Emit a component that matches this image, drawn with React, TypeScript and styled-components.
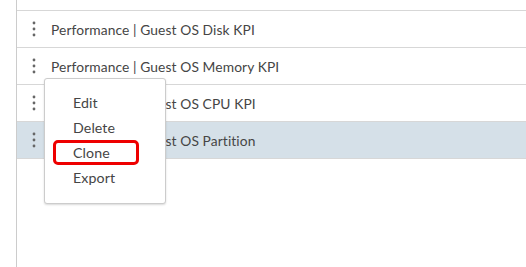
import styled, { createGlobalStyle } from "styled-components";

const GlobalStyle = createGlobalStyle`
  html, body {
    margin: 0;
    padding: 0;
    background: #ffffff;
    font-family: Lato, "Open Sans", sans-serif;
  }
`;

const Page = styled.div`
  width: 526px;
  height: 267px;
  overflow: hidden;
  padding-left: 16px;
  box-sizing: border-box;
`;

const Grid = styled.div`
  position: relative;
  height: 267px;
  border-left: 1px solid #cccccc;
`;

const TopStub = styled.div`
  height: 10px;
  border-bottom: 1px solid #d7d7d7;
`;

const Row = styled.div<{ selected?: boolean }>`
  display: flex;
  align-items: center;
  height: 36px;
  border-bottom: 1px solid #d7d7d7;
  background: ${({ selected }) => (selected ? "#d5e0e8" : "#ffffff")};
`;

const Handle = styled.div`
  width: 34px;
  display: flex;
  justify-content: center;
`;

const Label = styled.span`
  font-size: 13.8px;
  color: #454545;
  white-space: nowrap;
  letter-spacing: 0.1px;
`;

const Menu = styled.div`
  position: absolute;
  left: 27px;
  top: 78px;
  width: 120px;
  padding: 11px 0 13px;
  background: #ffffff;
  border: 1px solid #cccccc;
  border-radius: 3px;
  box-shadow: 0 1px 2px rgba(0, 0, 0, 0.15);
`;

const MenuItem = styled.div<{ marked?: boolean }>`
  position: relative;
  height: 25px;
  line-height: 25px;
  padding-left: 28px;
  font-size: 14.2px;
  color: #454545;
  letter-spacing: 0.1px;

  ${({ marked }) =>
    marked &&
    `
    &::before {
      content: "";
      position: absolute;
      left: 8px;
      top: 0;
      width: 86px;
      height: 25px;
      box-sizing: border-box;
      border: 3px solid #ee0000;
      border-radius: 5px;
    }
  `}
`;

function Dots() {
  return (
    <svg width="4" height="16" viewBox="0 0 4 16">
      <circle cx="2" cy="2" r="1.4" fill="#666666" />
      <circle cx="2" cy="8" r="1.4" fill="#666666" />
      <circle cx="2" cy="14" r="1.4" fill="#666666" />
    </svg>
  );
}

const rows = [
  { name: "Performance | Guest OS Disk KPI" },
  { name: "Performance | Guest OS Memory KPI" },
  { name: "Performance | Guest OS CPU KPI" },
  { name: "Performance | Guest OS Partition", selected: true },
];

export default function App() {
  return (
    <Page>
      <GlobalStyle />
      <Grid>
        <TopStub />
        {rows.map((r) => (
          <Row key={r.name} selected={r.selected}>
            <Handle>
              <Dots />
            </Handle>
            <Label>{r.name}</Label>
          </Row>
        ))}
        <Menu>
          <MenuItem>Edit</MenuItem>
          <MenuItem>Delete</MenuItem>
          <MenuItem marked>Clone</MenuItem>
          <MenuItem>Export</MenuItem>
        </Menu>
      </Grid>
    </Page>
  );
}
